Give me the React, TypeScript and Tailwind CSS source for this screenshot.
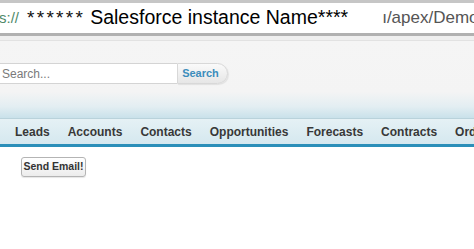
export default function App() {
  const tabs = ["Leads", "Accounts", "Contacts", "Opportunities", "Forecasts", "Contracts", "Orders"];

  return (
    <div className="w-[474px] h-[249px] overflow-hidden bg-white font-['Liberation_Sans',Arial,sans-serif]">
      {/* browser address bar */}
      <div className="h-[36px] border-t-[3px] border-b-[3px] border-t-[#c6c6c6] border-b-[#b1b1b1] bg-white flex items-center whitespace-nowrap overflow-hidden">
        <span className="text-[15px] text-[#4f8a6a] -ml-[1px]">s://</span>
        <span className="text-[19px] text-[#111] ml-[8px] tracking-[2.3px]">******</span>
        <span className="text-[19.5px] text-black ml-[5px] leading-none">Salesforce instance Name****</span>
        <span className="text-[17px] text-[#555] ml-[34px]">ı/apex/DemoPage</span>
      </div>
      <div className="h-[4px] bg-[#efefef]"></div>
      <div className="h-px bg-[#e2e2e2]"></div>

      {/* header with search */}
      <div className="h-[77px] bg-[linear-gradient(to_bottom,#f5f5f5_0%,#f4f4f4_66%,#e3eef2_85%,#c9e1ea_100%)] pt-[22px]">
        <div className="flex items-stretch h-[21px]">
          <div className="w-[179px] -ml-[2px] bg-white border border-[#d4d4d4] border-r-0 flex items-center pl-[3px] text-[12px] text-[#7a7a7a]">
            Search...
          </div>
          <button className="w-[51px] border border-[#d8d8d8] rounded-r-full bg-[linear-gradient(to_bottom,#fafafa,#e6e6e6)] text-[11px] font-bold text-[#3c8dbc] pr-[4px] shadow-[1px_1px_1px_rgba(0,0,0,0.08)]">
            Search
          </button>
        </div>
      </div>
      <div className="h-px bg-[#b9d2db]"></div>

      {/* tab bar */}
      <div className="h-[25px] bg-[linear-gradient(to_bottom,#e5f1f5,#d5e8ef)] flex items-center gap-[18px] pl-[15px] whitespace-nowrap overflow-hidden">
        {tabs.map((t) => (
          <span key={t} className="text-[12px] font-bold text-[#383838]">
            {t}
          </span>
        ))}
      </div>
      <div className="h-[3px] bg-[#2b8fb9]"></div>

      {/* page body */}
      <div className="pt-[6px] pl-[21px]">
        <button className="h-[20px] w-[65px] border border-[#b4b4b4] rounded-[3px] bg-[linear-gradient(to_bottom,#ffffff,#ececec)] text-[10.5px] font-bold text-[#333] shadow-[0_1px_1px_rgba(0,0,0,0.1)]">
          Send Email!
        </button>
      </div>
    </div>
  );
}
